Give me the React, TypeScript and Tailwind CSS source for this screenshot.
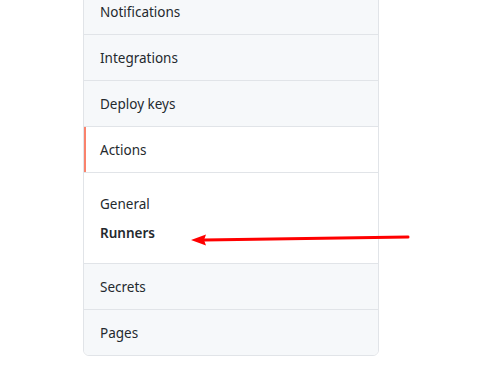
import React from 'react';

const topItems = ['Notifications', 'Integrations', 'Deploy keys'];
const bottomItems = ['Secrets', 'Pages'];

const MenuRow: React.FC<{ label: string; last?: boolean }> = ({ label, last }) => (
   <div className={`px-4 pt-[13px] pb-[11px] text-[13.5px] leading-[21px] bg-[#f6f8fa] ${last ? '' : 'border-b border-[#e1e4e8]'}`}>
      {label}
   </div>
);

const App: React.FC = () => {
   return (
      <div className="relative w-[495px] h-[375px] overflow-hidden bg-white text-[#24292e]" style={{ fontFamily: '"Segoe UI", "Noto Sans", "Liberation Sans", sans-serif' }}>
         <nav className="ml-[83px] mt-[-12px] w-[296px] border border-[#e1e4e8] rounded-b-md overflow-hidden">
            {topItems.map((item) => (
               <MenuRow key={item} label={item} />
            ))}
            {/* selected item */}
            <div className="relative px-4 pt-[13px] pb-[11px] text-[13.5px] leading-[21px] bg-white border-b border-[#e1e4e8]">
               <span className="absolute left-0 top-0 bottom-0 w-[2px] bg-[#f9826c]" />
               Actions
            </div>
            <div className="bg-white border-b border-[#e1e4e8] pt-[21px] pb-[19px] flex flex-col gap-2">
               <div className="px-4 text-[13.5px] leading-[21px]">General</div>
               <div className="px-4 text-[13.5px] leading-[21px] font-semibold">Runners</div>
            </div>
            {bottomItems.map((item, i) => (
               <MenuRow key={item} label={item} last={i === bottomItems.length - 1} />
            ))}
         </nav>

         {/* annotation arrow */}
         <svg className="absolute left-0 top-0" width="495" height="375" viewBox="0 0 495 375">
            <line x1="408" y1="237" x2="204" y2="240" stroke="#ff0000" strokeWidth="3" strokeLinecap="round" />
            <polygon points="191,240 206,234.5 204,240 206,245.5" fill="#ff0000" />
         </svg>
      </div>
   );
};

export default App;
